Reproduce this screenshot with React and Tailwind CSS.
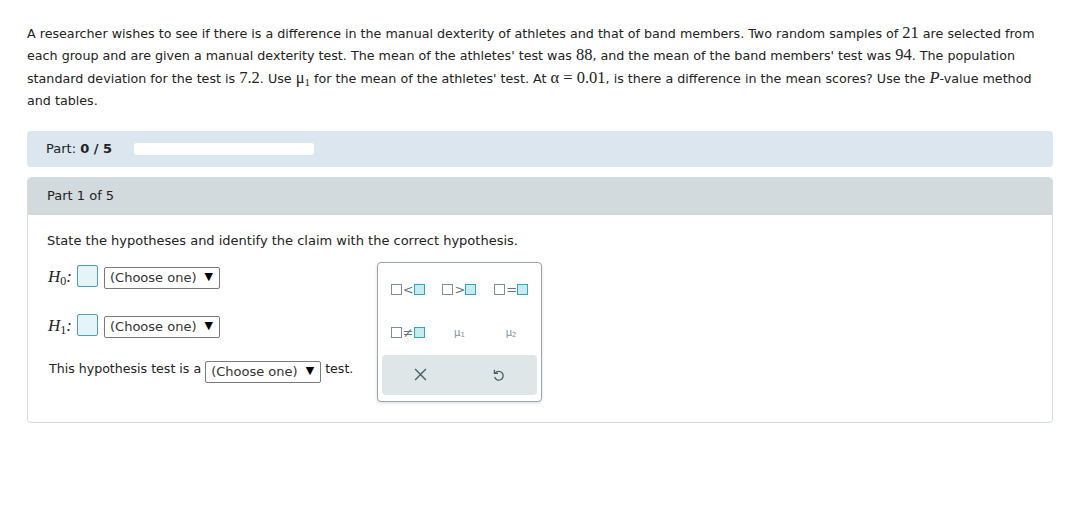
import React from "react";

const Num = ({children, italic}) => (
    <span className={"font-['Liberation_Serif',serif] text-[16.5px] leading-none " + (italic ? "italic" : "")}>{children}</span>
);

const Select = ({className = ""}) => (
    <span
        className={"inline-flex h-[22px] w-[116px] items-center justify-between rounded-[2px] border border-[#7a7a7a] bg-white pl-[5px] pr-[6px] text-[13px] text-[#333] " + className}>
        <span>(Choose one)</span>
        <span className="text-[11px] text-black">▼</span>
    </span>
);

const AnsBox = () => (
    <span className="inline-block h-[22px] w-[21px] rounded-[2px] border border-[#4e9fb2] bg-[#e5f4f8]"/>
);

const Sq = ({filled}) => (
    <span
        className={
            filled
                ? "inline-block h-[11px] w-[11px] border-[1.5px] border-[#2fa7bd] bg-[#c8eaf1]"
                : "inline-block h-[11px] w-[11px] border-[1.5px] border-[#7e8f96] bg-white"
        }
    />
);

const Rel = ({sym}) => (
    <span className="flex items-center gap-[1px] text-[13px] leading-none text-[#5f7780]">
        <Sq/>
        <span className="w-[10px] text-center">{sym}</span>
        <Sq filled/>
    </span>
);

const Label = ({sub}) => (
    <span className="w-[23px] font-['Liberation_Serif',serif] text-[17px] italic leading-none text-[#222]">
        H<sub className="text-[12px] not-italic">{sub}</sub>:
    </span>
);

const Palette = () => (
    <div className="mt-[-1px] w-[165px] shrink-0 rounded-[4px] border border-[#9aa6ab] bg-white px-[4px] pb-[6px] pt-[4px] shadow-[0_1px_3px_rgba(0,0,0,0.15)]">
        <div className="grid grid-cols-3 items-center justify-items-center pt-[16px]">
            <Rel sym="<"/>
            <Rel sym=">"/>
            <Rel sym="="/>
        </div>
        <div className="mt-[29px] grid grid-cols-3 items-center justify-items-center text-[#7d9199]">
            <Rel sym="≠"/>
            <span className="text-[10px]">μ<sub className="text-[7px]">1</sub></span>
            <span className="text-[10px]">μ<sub className="text-[7px]">2</sub></span>
        </div>
        <div className="mt-[15px] flex h-[40px] items-center justify-around rounded-[4px] bg-[#dfe6e8] text-[#46616b]">
            <svg width="13" height="13" viewBox="0 0 12 12" fill="none" stroke="currentColor" strokeWidth="1.3">
                <path d="M1 1l10 10M11 1L1 11"/>
            </svg>
            <svg width="13" height="14" viewBox="0 0 13 14" fill="none" stroke="currentColor" strokeWidth="1.3">
                <path d="M3.2 5.2A4.4 4.4 0 1 1 2.6 9"/>
                <path d="M2.4 1.8v3.6h3.6"/>
            </svg>
        </div>
    </div>
);

export default function App() {
    return (
        <div className="min-h-[505px] bg-white pl-[27px] pr-[19px] pt-[23px] font-['DejaVu_Sans',Verdana,sans-serif] text-[12.7px] text-[#222]">
            <p className="leading-[22.4px]">
                A researcher wishes to see if there is a difference in the manual dexterity of athletes and that of
                band members. Two random samples of <Num>21</Num> are selected from each group and are given a manual
                dexterity test. The mean of the athletes' test was <Num>88</Num>, and the mean of the band members'
                test was <Num>94</Num>. The population standard deviation for the test is <Num>7.2</Num>. Use{" "}
                <Num>μ<sub className="text-[11px]">1</sub></Num>{" "}
                for the mean of the athletes' test. At <Num>α = 0.01</Num>,
                is there a difference in the mean scores? Use the <Num italic>P</Num>-value
                method and tables.
            </p>

            {/* progress */}
            <div className="mt-[18px] flex h-[36px] items-center rounded-[4px] bg-[#dbe6ef] pl-[19px] text-[13px]">
                <span>Part: <b>0 / 5</b></span>
                <span className="ml-[22px] h-[12px] w-[180px] rounded-[3px] bg-white"/>
            </div>

            {/* part card */}
            <div className="mt-[10px] overflow-hidden rounded-[4px] border border-[#d5dde0] text-[13px]">
                <div className="flex h-[37px] items-center bg-[#d3dadd] pl-[19px]">Part 1 of 5</div>
                <div className="pb-[20px] pl-[19px] pt-[18px]">
                    <div className="leading-[16px]">State the hypotheses and identify the claim with the correct hypothesis.</div>
                    <div className="mt-[14px] flex items-start">
                        <div className="w-[330px] pt-[1px]">
                            <div className="flex items-center gap-[6px] pl-[1px]">
                                <Label sub="0"/>
                                <AnsBox/>
                                <Select className="mt-[3px]"/>
                            </div>
                            <div className="mt-[24px] flex items-center gap-[6px] pl-[1px]">
                                <Label sub="1"/>
                                <AnsBox/>
                                <Select className="mt-[3px]"/>
                            </div>
                            <div className="mt-[19px] flex items-center gap-[4px] pl-[2px]">
                                <span className="text-[12.6px]">This hypothesis test is a</span>
                                <Select className="mt-[4px]"/>
                                <span className="text-[12.6px]">test.</span>
                            </div>
                        </div>
                        <Palette/>
                    </div>
                </div>
            </div>
        </div>
    );
}
